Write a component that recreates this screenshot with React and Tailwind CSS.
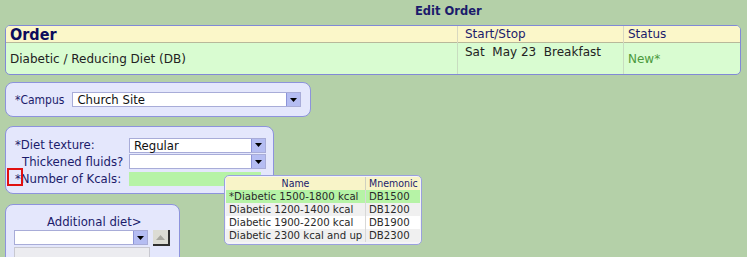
import React from "react";

const font = { fontFamily: '"DejaVu Sans Condensed", "DejaVu Sans", Verdana, sans-serif' };
const wide = { fontFamily: '"DejaVu Sans", Verdana, sans-serif' };

function Arrow() {
  return (
    <div className="w-[14px] h-full bg-[#b5bdf2] border-l border-[#8c94d8] flex items-center justify-center">
      <svg width="7" height="4" viewBox="0 0 7 4"><path d="M0 0h7L3.5 4z" fill="#000" /></svg>
    </div>
  );
}

function Select({ value, className = "" }) {
  return (
    <div className={"h-[15px] bg-white border border-[#a8acd8] flex items-stretch " + className}>
      <div className="flex-1 px-[4px] leading-[13px] text-[13px] text-[#111]">{value}</div>
      <Arrow />
    </div>
  );
}

export default function App() {
  return (
    <div style={font} className="w-[747px] h-[257px] bg-[#b4d0a8] overflow-hidden relative text-[12px]">
      <div style={wide} className="h-[25px] pl-[415px] pt-[3px] text-[11.5px] font-bold text-[#1b1b6b]">Edit Order</div>

      <div style={wide} className="mx-[5px] w-[736px] h-[50px] border border-[#8189d6] rounded-[5px] overflow-hidden bg-[#d9fcd1] text-[12px]">
        <div className="grid grid-cols-[451px_166px_1fr] h-[17px] bg-[#fbf7c9] border-b border-[#b8b89a]">
          <div style={font} className="pl-[4px] text-[16px] leading-[17px] font-bold text-[#0c0c5c]">Order</div>
          <div className="pl-[7px] leading-[17px] text-[#1b1b6b] border-l border-[#d8d8c0]">Start/Stop</div>
          <div className="pl-[4px] leading-[17px] text-[#1b1b6b] border-l border-[#d8d8c0]">Status</div>
        </div>
        <div className="grid grid-cols-[451px_166px_1fr] h-[31px]">
          <div className="pl-[4px] pt-[7px] text-[#222]">Diabetic / Reducing Diet (DB)</div>
          <div className="pl-[7px] pt-[0px] text-[#222] border-l border-[#c8dcc0] whitespace-pre">Sat  May 23  Breakfast</div>
          <div className="pl-[4px] pt-[7px] text-[#4c9a3c] border-l border-[#c8dcc0]">New*</div>
        </div>
      </div>

      <div className="mt-[7px] ml-[5px] w-[306px] h-[35px] bg-[#e4e7fc] border border-[#8d93dc] rounded-[8px] flex items-center pl-[9px] gap-[8px]">
        <span className="text-[#1b1b6b] text-[12px]">*Campus</span>
        <Select value="Church Site" className="w-[229px]" />
      </div>

      <div className="mt-[9px] ml-[5px] w-[269px] h-[68px] bg-[#e4e7fc] border border-[#8d93dc] rounded-[8px] pt-[10px] text-[13px] text-[#1b1b6b]">
        <div className="flex items-center h-[16px]">
          <span className="w-[123px] pl-[9px]">*Diet texture:</span>
          <Select value="Regular" className="w-[137px]" />
        </div>
        <div className="flex items-center h-[17px]">
          <span className="w-[123px] pl-[16px]">Thickened fluids?</span>
          <Select value="" className="w-[137px]" />
        </div>
        <div className="flex items-center h-[17px]">
          <span className="w-[123px] pl-[9px] relative">
            *Number of Kcals:
            <span className="absolute left-[1px] top-[-1px] w-[16px] h-[18px] border-2 border-[#e01010]"></span>
          </span>
          <div className="w-[132px] h-[14px] bg-[#b6f3a6]"></div>
        </div>
      </div>

      <div className="mt-[10px] ml-[5px] w-[175px] h-[70px] bg-[#e4e7fc] border border-[#8d93dc] rounded-[8px] pt-[9px] text-[13px] text-[#1b1b6b]">
        <div className="pl-[41px] h-[15px] leading-[15px]">Additional diet&gt;</div>
        <div className="flex items-start pl-[8px] mt-[1px] gap-[3px]">
          <div className="flex flex-col">
            <Select value="" className="w-[134px]" />
            <div className="w-[136px] h-[20px] mt-[2px] bg-[#ececf0] border border-[#c8c8d0]"></div>
          </div>
          <div className="w-[17px] h-[16px] bg-[#dcdcd4] border-r-2 border-b-2 border-[#303030] flex items-center justify-center">
            <svg width="9" height="5" viewBox="0 0 9 5"><path d="M0 5h9L4.5 0z" fill="#a8a8a0" /></svg>
          </div>
        </div>
      </div>

      <div className="absolute left-[224px] top-[175px] w-[198px] h-[70px] bg-[#f4f4f8] border border-[#9aa0de] rounded-[5px] overflow-hidden text-[11.3px] text-[#2a2a2a] pt-[1px] px-[1px]">
        <div className="grid grid-cols-[139px_1fr] h-[13px] leading-[13px] bg-[#f8f4c8] text-[#1b1b6b] text-[10.5px]">
          <div className="text-center">Name</div>
          <div className="pl-[3px] border-l border-[#d0d0c0]">Mnemonic</div>
        </div>
        {[
          ["*Diabetic 1500-1800 kcal", "DB1500", "bg-[#b6f3a6]"],
          ["Diabetic 1200-1400 kcal", "DB1200", "bg-[#f0f0f0]"],
          ["Diabetic 1900-2200 kcal", "DB1900", "bg-[#ffffff]"],
          ["Diabetic 2300 kcal and up", "DB2300", "bg-[#f0f0f0]"],
        ].map(([n, m, bg]) => (
          <div key={m} className={"grid grid-cols-[139px_1fr] h-[13px] leading-[13px] " + bg}>
            <div className="pl-[3px] whitespace-nowrap">{n}</div>
            <div className="pl-[3px] border-l border-[#d8d8d8]">{m}</div>
          </div>
        ))}
      </div>
    </div>
  );
}
